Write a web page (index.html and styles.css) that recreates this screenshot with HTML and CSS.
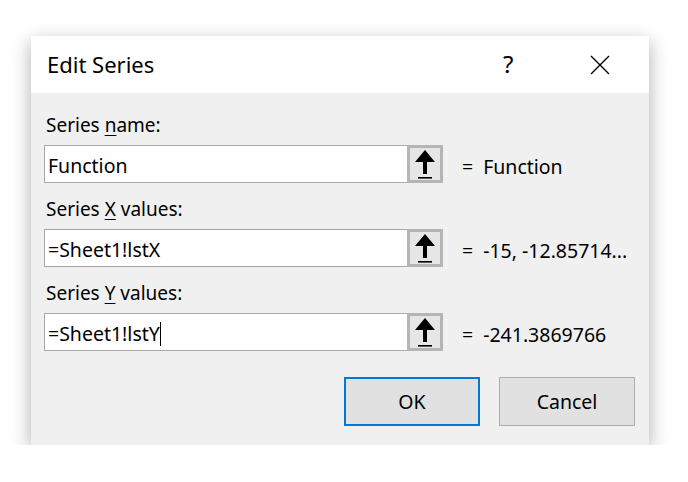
FILE: index.html
```html
<!DOCTYPE html>
<html>
<head>
  <title>Edit Series</title>
  <link rel="stylesheet" href="styles.css">
</head>
<body>
  <div class="dialog">
    <div class="title-bar">
      <span class="title">Edit Series</span>
      <span class="help">?</span>
      <span class="close">
        <svg width="20" height="20" viewBox="0 0 20 20"><path d="M1 1 L19 19 M19 1 L1 19" stroke="#000" stroke-width="1.4" fill="none"/></svg>
      </span>
    </div>
    <div class="content">
      <div class="label">Series <u>n</u>ame:</div>
      <div class="field-row">
        <div class="ref-box">
          <div class="ref-text">Function</div>
          <div class="ref-btn">
            <svg width="30" height="30" viewBox="0 0 30 30"><path d="M13 25 V13 H5 L15 1 L25 13 H17 V25 Z" fill="#000"/><rect x="8" y="28" width="14" height="1.6" fill="#000"/></svg>
          </div>
        </div>
        <div class="value"><span class="eq">=</span>Function</div>
      </div>
      <div class="label">Series <u>X</u> values:</div>
      <div class="field-row">
        <div class="ref-box">
          <div class="ref-text">=Sheet1!lstX</div>
          <div class="ref-btn">
            <svg width="30" height="30" viewBox="0 0 30 30"><path d="M13 25 V13 H5 L15 1 L25 13 H17 V25 Z" fill="#000"/><rect x="8" y="28" width="14" height="1.6" fill="#000"/></svg>
          </div>
        </div>
        <div class="value"><span class="eq">=</span>-15, -12.85714...</div>
      </div>
      <div class="label">Series <u>Y</u> values:</div>
      <div class="field-row">
        <div class="ref-box">
          <div class="ref-text">=Sheet1!lstY<span class="caret"></span></div>
          <div class="ref-btn">
            <svg width="30" height="30" viewBox="0 0 30 30"><path d="M13 25 V13 H5 L15 1 L25 13 H17 V25 Z" fill="#000"/><rect x="8" y="28" width="14" height="1.6" fill="#000"/></svg>
          </div>
        </div>
        <div class="value"><span class="eq">=</span>-241.3869766</div>
      </div>
      <div class="buttons">
        <div class="btn btn-default">OK</div>
        <div class="btn">Cancel</div>
      </div>
    </div>
  </div>
</body>
</html>
```
FILE: styles.css
```css
/* Page */
body {
  margin: 0;
  background: #fff;
  font-family: "Noto Sans", "Open Sans", sans-serif;
  color: #000;
}
.dialog {
  margin: 36px 0 0 31px;
  width: 618px;
  height: 409px;
  background: #f0f0f0;
  box-shadow: 0 6px 18px rgba(0, 0, 0, 0.32);
  display: flex;
  flex-direction: column;
}
/* Title bar */
.title-bar {
  height: 57px;
  background: #fff;
  display: flex;
  align-items: center;
  padding-left: 16px;
}
.title {
  font-size: 22px;
  flex: 1;
  padding-bottom: 2px;
}
.help {
  font-size: 24px;
  width: 20px;
  margin-right: 67px;
  padding-bottom: 2px;
}
.close {
  width: 20px;
  height: 20px;
  margin-right: 39px;
}
.close svg {
  display: block;
}
/* Fields */
.content {
  padding: 20px 13px 0 13px;
}
.label {
  font-size: 19px;
  line-height: 24px;
  padding-left: 2px;
  margin-bottom: 8px;
}
.label u {
  text-underline-offset: 3px;
}
.field-row {
  display: flex;
  align-items: center;
  margin-bottom: 14px;
}
.ref-box {
  width: 399px;
  height: 38px;
  display: flex;
  background: #fff;
  border: 1px solid #a9a9a9;
  box-sizing: border-box;
}
.ref-text {
  flex: 1;
  font-size: 19.5px;
  line-height: 36px;
  padding: 2px 0 0 3px;
  white-space: nowrap;
}
.caret {
  display: inline-block;
  width: 1px;
  height: 24px;
  background: #000;
  vertical-align: -5px;
}
.ref-btn {
  width: 36px;
  height: 38px;
  margin: -1px -1px -1px 0;
  box-sizing: border-box;
  border: 3px solid #b5b5b5;
  background: #e6e6e6;
  display: flex;
  align-items: center;
  justify-content: center;
}
.ref-btn svg {
  display: block;
}
.value {
  font-size: 19.5px;
  margin-left: 19px;
  padding-top: 4px;
  white-space: nowrap;
}
.eq {
  margin-right: 10px;
}
/* Buttons */
.buttons {
  display: flex;
  justify-content: flex-end;
  gap: 19px;
  margin-top: 26px;
  padding-right: 1px;
}
.btn {
  width: 136px;
  height: 49px;
  box-sizing: border-box;
  border: 1px solid #adadad;
  background: #e1e1e1;
  font-size: 19.5px;
  display: flex;
  align-items: center;
  justify-content: center;
}
.btn-default {
  border: 2px solid #0078d7;
}
```
